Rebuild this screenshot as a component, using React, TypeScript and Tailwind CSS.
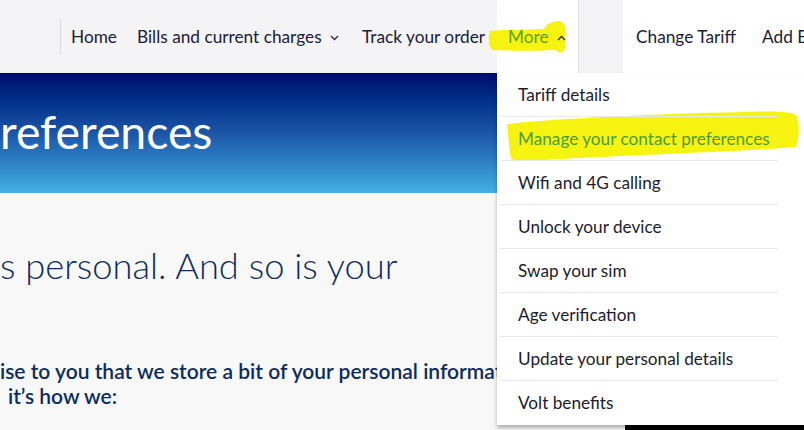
import React from 'react';

const font = { fontFamily: 'Lato, "Open Sans", sans-serif' };

function Chevron({ up = false }: { up?: boolean }) {
  return (
    <svg width="9" height="6" viewBox="0 0 9 6" className="ml-[8px] mt-[2px]">
      <path
        d={up ? 'M1 5 L4.5 1.5 L8 5' : 'M1 1 L4.5 4.5 L8 1'}
        fill="none"
        stroke="#2a2a3c"
        strokeWidth="1.3"
      />
    </svg>
  );
}

const menuItems = [
  'Tariff details',
  'Manage your contact preferences',
  'Wifi and 4G calling',
  'Unlock your device',
  'Swap your sim',
  'Age verification',
  'Update your personal details',
  'Volt benefits',
];

export default function App() {
  return (
    <div className="relative w-[804px] h-[430px] overflow-hidden bg-[#f8f8f9]" style={font}>
      {/* top nav */}
      <nav className="flex h-[73px] bg-[#f4f4f6] text-[17.25px] text-[#1b1b3a]">
        <div className="w-[60px] shrink-0" />
        <div className="flex items-center">
          <div className="h-[36px] border-l border-[#dcdce0]" />
        </div>
        <div className="flex items-center w-[76px] shrink-0 pl-[10px]">Home</div>
        <div className="flex items-center w-[225px] shrink-0">
          Bills and current charges
          <Chevron />
        </div>
        <div className="flex items-center w-[135px] shrink-0">Track your order</div>
        <div className="relative flex items-center w-[81px] shrink-0 pl-[11px] bg-white">
          <svg
            className="absolute left-[-9px] top-[19px]"
            width="82"
            height="35"
            viewBox="0 0 82 35"
          >
            <path
              d="M2 12 C20 10 40 11 56 10 C58 5 64 2 71 2 C77 3 78 8 77 14 C78 22 78 30 75 33 C71 35 69 32 68 31 C50 32 25 32 4 31 C0 27 0 16 2 12 Z"
              fill="#f7f311"
            />
          </svg>
          <span className="relative text-[#5e9f1f]">More</span>
          <span className="relative">
            <Chevron up />
          </span>
        </div>
        <div className="w-[45px] shrink-0 border-l border-[#e2e2e4] bg-[#f3f3f5]" />
        <div className="flex flex-1 min-w-0 items-center bg-white pl-[13px] whitespace-nowrap overflow-hidden">
          <span className="w-[126px] shrink-0">Change Tariff</span>
          <span className="shrink-0">Add Extras</span>
        </div>
      </nav>

      {/* hero */}
      <div className="h-[120px] bg-gradient-to-b from-[#000a6e] via-[#1d55a7] to-[#43b1e3] flex items-center">
        <h1 className="text-[46.3px] leading-none text-white pb-[4px]">references</h1>
      </div>

      {/* content */}
      <div className="text-[#0c2c5e]">
        <h2 className="pt-[50px] text-[36.3px] leading-[44px] font-light whitespace-nowrap">
          s personal. And so is your
        </h2>
        <div className="pt-[71px] text-[21px] leading-[25px] font-semibold whitespace-nowrap">
          <p>ise to you that we store a bit of your personal information</p>
          <p className="pl-[8px]">it’s how we:</p>
        </div>
      </div>

      {/* dropdown menu */}
      <div className="absolute left-[497px] top-[73px] w-[307px] h-[352px] bg-white shadow-[0_3px_4px_rgba(0,0,0,0.3)]">
        <svg
          className="absolute left-[6px] top-[37px]"
          width="296"
          height="54"
          viewBox="0 0 296 54"
        >
          <path
            d="M4 14 C60 8 150 4 240 2 C270 1 290 1 294 6 C297 14 296 30 293 37 C250 41 150 44 20 51 C10 52 8 50 7 44 C6 34 5 24 4 14 Z"
            fill="#f7f311"
          />
        </svg>
        {menuItems.map((item, i) => (
          <div key={item} className="relative h-[44px] pl-[3px] pr-[26px]">
            <div
              className={
                'flex h-full items-center pl-[18px] text-[17.2px] ' +
                (i === 1 ? 'text-[#4c9d36] ' : 'text-[#1b1b2e] ') +
                (i < menuItems.length - 1 ? 'border-b border-[#e8e8ea]' : '')
              }
            >
              {item}
            </div>
          </div>
        ))}
      </div>

      <div className="absolute left-[625px] top-[425px] w-[179px] h-[5px] bg-black" />
    </div>
  );
}
